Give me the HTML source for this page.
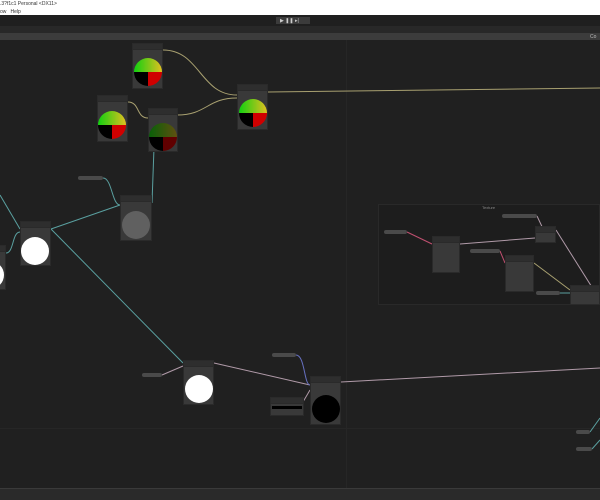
<!DOCTYPE html>
<html><head><style>
*{margin:0;padding:0;box-sizing:border-box}
body{width:600px;height:500px;overflow:hidden;background:#202020;font-family:"Liberation Sans",sans-serif;position:relative}
.a{position:absolute}
.n{position:absolute;background:#393939;border:1px solid #2a2a2a}
.n .h{height:6px;background:#2e2e2e;border-bottom:1px solid #2a2a2a}
.s{position:absolute;border-radius:50%}
.c{background:linear-gradient(90deg,#10d010,#e0c020) top/100% 50% no-repeat,linear-gradient(90deg,#000 50%,#d00000 50%) bottom/100% 50% no-repeat}
.cd{background:linear-gradient(90deg,#086008,#605010) top/100% 50% no-repeat,linear-gradient(90deg,#000 50%,#600000 50%) bottom/100% 50% no-repeat}
.p{position:absolute;height:4px;background:#4a4a4a;border-radius:2px}
</style></head><body>
<div class="a" style="left:0;top:0;width:600px;height:15px;background:#fff"></div>
<div class="a" style="left:0;top:1px;font-size:5px;color:#333">.3?f1c1 Personal &lt;DX11&gt;</div>
<div class="a" style="left:0;top:9px;font-size:5px;color:#333">ow&nbsp;&nbsp; Help</div>
<div class="a" style="left:0;top:15px;width:600px;height:11px;background:#1f1f1f"></div>
<div class="a" style="left:276px;top:17px;width:34px;height:7px;background:#3b3b3b"></div>
<div class="a" style="left:280px;top:18px;font-size:5px;color:#ccc">▶ ❚❚ ▸|</div>
<div class="a" style="left:0;top:26px;width:600px;height:7px;background:#282828"></div>
<div class="a" style="left:0;top:33px;width:600px;height:7px;background:#3c3c3c"></div>
<div class="a" style="left:590px;top:34px;font-size:5px;color:#bbb">Co</div>
<div class="a" style="left:346px;top:40px;width:1px;height:450px;background:#262626"></div>
<div class="a" style="left:0;top:428px;width:600px;height:1px;background:#262626"></div>
<div class="a" style="left:0;top:488px;width:600px;height:12px;background:#2a2a2a;border-top:1px solid #3a3a3a"></div>
<div class="a" style="left:378px;top:204px;width:222px;height:101px;background:#1d1d1d;border:1px solid #292929"></div>
<div class="a" style="left:482px;top:205px;font-size:4px;color:#888">Texture</div>
<svg class="a" style="left:0;top:0" width="600" height="500">
<g fill="none" stroke-width="1">
<path d="M163 50 C200 50 200 95 237 95" stroke="#a8a070"/>
<path d="M177 115 C207 115 207 98 237 98" stroke="#a8a070"/>
<path d="M268 92 L600 88" stroke="#a8a070"/>
<path d="M128 102 C140 102 136 118 148 118" stroke="#a8a070"/>
<path d="M152 203 L155 120" stroke="#5aa0a0"/>
<path d="M51 229 L120 205" stroke="#5aa0a0"/>
<path d="M51 229 L183 363" stroke="#5aa0a0"/>
<path d="M0 195 L20 229" stroke="#5aa0a0"/>
<path d="M6 253 C14 253 12 232 20 232" stroke="#5aa0a0"/>
<path d="M103 178 C112 178 112 205 120 205" stroke="#5aa0a0"/>
<path d="M214 363 L310 385" stroke="#b09aa8"/>
<path d="M162 375 L183 366" stroke="#b09aa8"/>
<path d="M341 382 L600 368" stroke="#b09aa8"/>
<path d="M296 355 C305 355 304 385 310 385" stroke="#6670c0"/>
<path d="M300 407 L310 390" stroke="#b09aa8"/>
<path d="M407 232 L432 244" stroke="#c05070"/>
<path d="M460 244 L535 238" stroke="#b09aa8"/>
<path d="M537 216 L545 233" stroke="#b09aa8"/>
<path d="M500 251 L505 263" stroke="#c05070"/>
<path d="M534 263 L570 290" stroke="#a8a070"/>
<path d="M556 230 L600 300" stroke="#b09aa8"/>
<path d="M560 293 L570 293" stroke="#5aa0a0"/>
<path d="M590 432 L600 418" stroke="#5aa0a0"/>
<path d="M592 449 L600 440" stroke="#5aa0a0"/>
</g></svg>
<div class="n" style="left:132px;top:43px;width:31px;height:46px"><div class="h"></div></div>
<div class="s c" style="left:134px;top:58px;width:28px;height:28px"></div>
<div class="n" style="left:97px;top:95px;width:31px;height:47px"><div class="h"></div></div>
<div class="s c" style="left:98px;top:111px;width:28px;height:28px"></div>
<div class="n" style="left:148px;top:108px;width:30px;height:44px"><div class="h"></div></div>
<div class="s cd" style="left:149px;top:123px;width:28px;height:28px"></div>
<div class="n" style="left:237px;top:84px;width:31px;height:46px"><div class="h"></div></div>
<div class="s c" style="left:239px;top:99px;width:28px;height:28px"></div>
<div class="n" style="left:120px;top:195px;width:32px;height:46px"><div class="h"></div></div>
<div class="s" style="left:122px;top:211px;width:28px;height:28px;background:#606060"></div>
<div class="n" style="left:20px;top:221px;width:31px;height:45px"><div class="h"></div></div>
<div class="s" style="left:21px;top:237px;width:28px;height:28px;background:#fff"></div>
<div class="n" style="left:-25px;top:245px;width:31px;height:45px"><div class="h"></div></div>
<div class="s" style="left:-10px;top:261px;width:14px;height:28px;border-radius:0 14px 14px 0;background:#fff"></div>
<div class="n" style="left:183px;top:360px;width:31px;height:45px"><div class="h"></div></div>
<div class="s" style="left:185px;top:375px;width:28px;height:28px;background:#fff"></div>
<div class="n" style="left:310px;top:376px;width:31px;height:49px"><div class="h"></div></div>
<div class="s" style="left:312px;top:395px;width:28px;height:28px;background:#000"></div>
<div class="n" style="left:270px;top:397px;width:34px;height:19px"><div class="h"></div><div style="margin:2px 1px;height:3px;background:#000"></div></div>
<div class="n" style="left:432px;top:236px;width:28px;height:37px"><div class="h"></div></div>
<div class="n" style="left:505px;top:255px;width:29px;height:37px"><div class="h"></div></div>
<div class="n" style="left:535px;top:226px;width:21px;height:17px"><div class="h"></div></div>
<div class="n" style="left:570px;top:285px;width:30px;height:20px"><div class="h"></div></div>
<div class="p" style="left:78px;top:176px;width:25px"></div>
<div class="p" style="left:142px;top:373px;width:20px"></div>
<div class="p" style="left:272px;top:353px;width:24px"></div>
<div class="p" style="left:384px;top:230px;width:23px"></div>
<div class="p" style="left:502px;top:214px;width:35px"></div>
<div class="p" style="left:470px;top:249px;width:30px"></div>
<div class="p" style="left:536px;top:291px;width:24px"></div>
<div class="p" style="left:576px;top:430px;width:14px"></div>
<div class="p" style="left:576px;top:447px;width:16px"></div>
</body></html>
